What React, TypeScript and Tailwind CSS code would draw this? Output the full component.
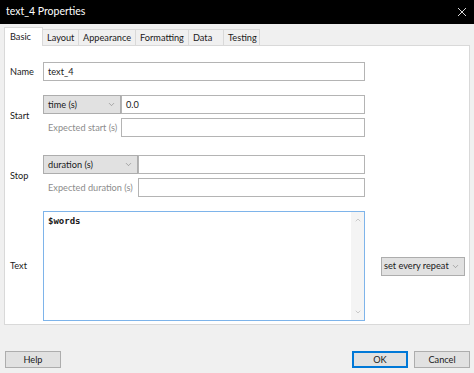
import { ChevronDown, ChevronUp } from "lucide-react";

function Select({ label, width, pad = "pl-[4px]" }: { label: string; width: string; pad?: string }) {
  return (
    <div className={`${width} ${pad} h-[19px] bg-[#e1e1e1] border border-[#adadad] flex items-center justify-between pr-[4px] shrink-0 whitespace-nowrap overflow-hidden`}>
      <span>{label}</span>
      <ChevronDown className="w-[9px] h-[9px] text-[#7a7a7a] shrink-0" strokeWidth={1.5} />
    </div>
  );
}

function Input({ width, value }: { width: string; value?: string }) {
  return (
    <div className={`${width} h-[19px] bg-white border border-[#b4b4b4] flex items-center pl-[4px] shrink-0`}>
      {value}
    </div>
  );
}

const tabs = [
  { label: "Layout", w: "w-[36px]" },
  { label: "Appearance", w: "w-[57px]" },
  { label: "Formatting", w: "w-[53px]" },
  { label: "Data", w: "w-[35px]" },
  { label: "Testing", w: "w-[36px]" },
];

export default function App() {
  return (
    <div className="w-[474px] h-[373px] bg-[#f0f0f0] flex flex-col font-['Lato',sans-serif] text-[9.2px] text-[#1a1a1a] overflow-hidden whitespace-nowrap">
      {/* title bar */}
      <div className="h-[24px] bg-black text-white flex items-center justify-between pl-[6px] pr-[6px] shrink-0">
        <span className="text-[10.5px]">text_4 Properties</span>
        <svg width="10" height="10" viewBox="0 0 10 10" className="mr-[1px]">
          <path d="M1 1L9 9M9 1L1 9" stroke="#d8d8d8" strokeWidth="1" />
        </svg>
      </div>

      {/* tabs */}
      <div className="flex items-end h-[21px] pl-[4px] shrink-0">
        <div className="h-[19px] w-[39px] bg-white border border-b-0 border-[#d9d9d9] flex items-center pl-[5px] relative top-[1px] z-10">
          Basic
        </div>
        {tabs.map((t) => (
          <div
            key={t.label}
            className={`${t.w} h-[16px] pl-[4px] bg-[#f0f0f0] border border-b-0 border-l-0 border-[#d9d9d9] flex items-center`}
          >
            {t.label}
          </div>
        ))}
      </div>

      {/* panel */}
      <div className="ml-[4px] w-[466px] h-[280px] bg-white border border-[#d9d9d9] flex flex-col pt-[16px] shrink-0">
        {/* name */}
        <div className="flex items-center">
          <div className="w-[38px] pl-[5px] shrink-0">Name</div>
          <Input width="w-[322px]" value="text_4" />
        </div>

        {/* start */}
        <div className="flex items-center mt-[14px]">
          <div className="w-[38px] pl-[5px] shrink-0">Start</div>
          <div className="flex flex-col gap-[4px]">
            <div className="flex">
              <Select label="time (s)" width="w-[78px]" />
              <Input width="w-[244px]" value="0.0" />
            </div>
            <div className="flex items-center">
              <div className="w-[78px] pl-[5px] text-[#8c8c8c] shrink-0">Expected start (s)</div>
              <Input width="w-[244px]" />
            </div>
          </div>
        </div>

        {/* stop */}
        <div className="flex items-center mt-[18px]">
          <div className="w-[38px] pl-[5px] shrink-0">Stop</div>
          <div className="flex flex-col gap-[4px]">
            <div className="flex">
              <Select label="duration (s)" width="w-[95px]" />
              <Input width="w-[227px]" />
            </div>
            <div className="flex items-center">
              <div className="w-[95px] pl-[5px] text-[#8c8c8c] shrink-0">Expected duration (s)</div>
              <Input width="w-[227px]" />
            </div>
          </div>
        </div>

        {/* text */}
        <div className="flex items-center mt-[14px]">
          <div className="w-[38px] pl-[5px] shrink-0">Text</div>
          <div className="w-[322px] h-[110px] border border-[#7eb4ea] bg-white flex shrink-0">
            <div className="flex-1 pl-[4px] pt-[3px] font-['DejaVu_Sans_Mono',monospace] font-bold text-[9px]">
              $words
            </div>
            <div className="w-[13px] bg-[#f4f4f4] flex flex-col justify-between items-center py-[4px]">
              <ChevronUp className="w-[8px] h-[8px] text-[#a0a0a0]" strokeWidth={1.5} />
              <ChevronDown className="w-[8px] h-[8px] text-[#a0a0a0]" strokeWidth={1.5} />
            </div>
          </div>
          <div className="ml-[16px]">
            <Select label="set every repeat" width="w-[84px]" pad="pl-[2px]" />
          </div>
        </div>
      </div>

      {/* buttons */}
      <div className="flex items-center justify-between mt-[26px] pl-[5px] pr-[4px]">
        <div className="w-[56px] h-[17px] bg-[#e1e1e1] border border-[#adadad] flex items-center justify-center">
          Help
        </div>
        <div className="flex gap-[6px]">
          <div className="w-[56px] h-[17px] bg-[#e1e1e1] border-2 border-[#0078d7] flex items-center justify-center">
            OK
          </div>
          <div className="w-[56px] h-[17px] bg-[#e1e1e1] border border-[#adadad] flex items-center justify-center">
            Cancel
          </div>
        </div>
      </div>
    </div>
  );
}
